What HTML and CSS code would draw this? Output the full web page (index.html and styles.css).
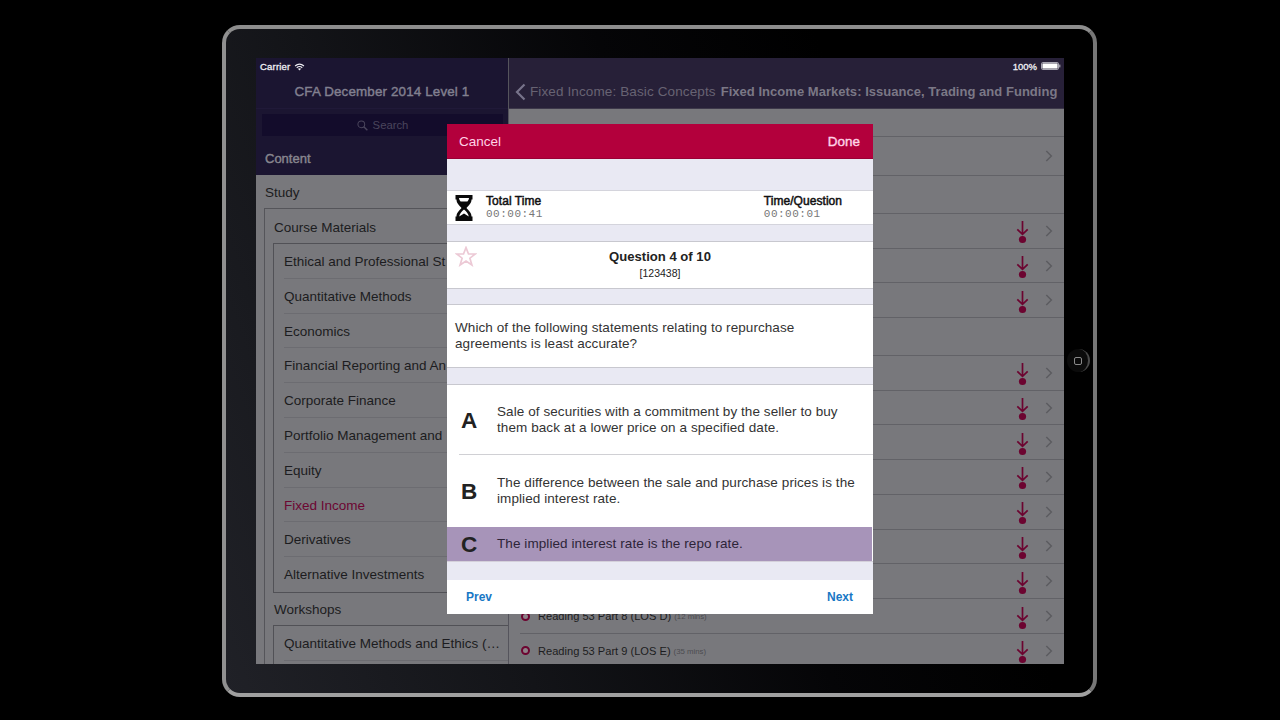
FILE: index.html
```html
<!DOCTYPE html>
<html lang="en">
<head>
<meta charset="UTF-8">
<meta name="viewport" content="width=device-width, initial-scale=1.0">
<title>CFA December 2014 Level 1</title>
<link rel="stylesheet" href="styles.css">
</head>
<body>
<!-- shared icons -->
<svg class="sprite">
    <symbol id="download" viewBox="0 0 14 24">
        <path d="M6.500 1V14M1.300 9.300L6.500 14.400L11.700 9.300" fill="none" stroke="#6c0430" stroke-width="1.700"/>
        <circle cx="6.500" cy="19.500" r="3.600" fill="#6c0430"/>
    </symbol>
    <symbol id="chevron" viewBox="0 0 8 12">
        <path d="M1.3 1L6.3 6L1.3 11" fill="none" stroke="#5c5c60" stroke-width="1.5"/>
    </symbol>
</svg>

<div class="tablet">
    <div class="screen">
        <div class="sidebar">
            <div class="sidebar-top">
                <div class="status">
                    <span>Carrier</span>
                    <svg class="wifi" viewBox="0 0 12 9">
                        <path d="M1 3.4Q6 -1 11 3.4M2.9 5.3Q6 2.6 9.1 5.3" fill="none" stroke="#f0f0f4" stroke-width="1.3"/>
                        <path d="M4.2 6.6Q6 5.2 7.8 6.6L6 8.5Z" fill="#f0f0f4"/>
                    </svg>
                </div>
                <h1>CFA December 2014 Level 1</h1>
            </div>
            <div class="search">
                <svg class="search-icon" viewBox="0 0 12 12">
                    <circle cx="4.7" cy="4.7" r="3.7" fill="none" stroke="#4a455c" stroke-width="1.1"/>
                    <path d="M7.4 7.4L11.3 11.3" stroke="#4a455c" stroke-width="1.5"/>
                </svg>
                <span>Search</span>
            </div>
            <h2>Content</h2>
            <div class="tree">
                <div class="study">Study</div>
                <div class="group">
                    <div class="group-title">Course Materials</div>
                    <ul class="topics">
                        <li>Ethical and Professional St</li>
                        <li>Quantitative Methods</li>
                        <li>Economics</li>
                        <li>Financial Reporting and An</li>
                        <li>Corporate Finance</li>
                        <li>Portfolio Management and</li>
                        <li>Equity</li>
                        <li class="active">Fixed Income</li>
                        <li>Derivatives</li>
                        <li>Alternative Investments</li>
                    </ul>
                    <div class="group-title workshops">Workshops</div>
                    <ul class="topics">
                        <li>Quantitative Methods and Ethics (…</li>
                        <li></li>
                    </ul>
                </div>
            </div>
        </div>

        <div class="detail">
            <div class="detail-top">
                <div class="status right">
                    <span>100%</span>
                    <svg class="battery" viewBox="0 0 20 9">
                        <rect x="0.5" y="0.5" width="17" height="7" rx="1.2" fill="none" stroke="#a8a6b2"/>
                        <rect x="1.4" y="1.4" width="15.2" height="5.2" fill="#fff"/>
                        <path d="M18.8 2.6V5.4" stroke="#c8c8d0"/>
                    </svg>
                </div>
                <div class="crumbs">
                    <svg class="back" viewBox="0 0 11 18"><path d="M9.5 1.5L2 9L9.5 16.5" fill="none" stroke="#77738a" stroke-width="2.2"/></svg>
                    <span class="crumb">Fixed Income: Basic Concepts</span>
                    <span class="current">Fixed Income Markets: Issuance, Trading and Funding</span>
                </div>
            </div>
            <div class="section short"></div>
            <div class="row tall"><svg class="chev"><use href="#chevron"/></svg></div>
            <div class="section"></div>
            <div class="row"><svg class="down"><use href="#download"/></svg><svg class="chev"><use href="#chevron"/></svg></div>
            <div class="row"><svg class="down"><use href="#download"/></svg><svg class="chev"><use href="#chevron"/></svg></div>
            <div class="row"><svg class="down"><use href="#download"/></svg><svg class="chev"><use href="#chevron"/></svg></div>
            <div class="section"></div>
            <div class="row"><svg class="down"><use href="#download"/></svg><svg class="chev"><use href="#chevron"/></svg></div>
            <div class="row"><svg class="down"><use href="#download"/></svg><svg class="chev"><use href="#chevron"/></svg></div>
            <div class="row"><svg class="down"><use href="#download"/></svg><svg class="chev"><use href="#chevron"/></svg></div>
            <div class="row"><svg class="down"><use href="#download"/></svg><svg class="chev"><use href="#chevron"/></svg></div>
            <div class="row"><svg class="down"><use href="#download"/></svg><svg class="chev"><use href="#chevron"/></svg></div>
            <div class="row"><svg class="down"><use href="#download"/></svg><svg class="chev"><use href="#chevron"/></svg></div>
            <div class="row"><svg class="down"><use href="#download"/></svg><svg class="chev"><use href="#chevron"/></svg></div>
            <div class="row inset"><i class="ring"></i><span class="reading">Reading 53 Part 8 (LOS D)</span><small>(12 mins)</small><svg class="down"><use href="#download"/></svg><svg class="chev"><use href="#chevron"/></svg></div>
            <div class="row inset"><i class="ring"></i><span class="reading">Reading 53 Part 9 (LOS E)</span><small>(35 mins)</small><svg class="down"><use href="#download"/></svg><svg class="chev"><use href="#chevron"/></svg></div>
        </div>

        <div class="modal">
            <div class="modal-head">
                <span class="cancel">Cancel</span>
                <span class="done">Done</span>
            </div>
            <div class="timer">
                <svg class="hourglass" viewBox="0 0 18 26">
                    <path d="M0.500 0H17.500V4.500H16.500C16.500 8.500 13.500 10.500 11.500 13C13.500 15.500 16.500 17.500 16.500 21.500H17.500V26H0.500V21.500H1.500C1.500 17.500 4.500 15.500 6.500 13C4.500 10.500 1.500 8.500 1.500 4.500H0.500Z" fill="#0a0a0a"/>
                    <path d="M4 3H14C13.800 4.700 13.200 5.700 12.400 6.500H5.600C4.800 5.700 4.200 4.700 4 3ZM9 14.500C11.500 16.800 13.300 18.300 13.800 21.500L9 18.500L4.200 21.500C4.700 18.300 6.500 16.800 9 14.500Z" fill="#fff"/>
                </svg>
                <div class="time">
                    <b>Total Time</b>
                    <span>00:00:41</span>
                </div>
                <div class="time per-question">
                    <b>Time/Question</b>
                    <span>00:00:01</span>
                </div>
            </div>
            <div class="heading">
                <svg class="star" viewBox="0 0 22 21">
                    <path d="M11 1.600L13.500 8H20.200L14.900 12.200L16.900 19L11 15L5.100 19L7.100 12.200L1.800 8H8.500Z" fill="none" stroke="#ecc9d5" stroke-width="1.700"/>
                </svg>
                <b>Question 4 of 10</b>
                <span class="number">[123438]</span>
            </div>
            <div class="question">Which of the following statements relating to repurchase<br>agreements is least accurate?</div>
            <div class="answers">
                <div class="answer a"><b>A</b><p>Sale of securities with a commitment by the seller to buy<br>them back at a lower price on a specified date.</p></div>
                <div class="answer b"><b>B</b><p>The difference between the sale and purchase prices is the<br>implied interest rate.</p></div>
                <div class="answer c selected"><b>C</b><p>The implied interest rate is the repo rate.</p></div>
            </div>
            <div class="modal-foot">
                <span>Prev</span>
                <span>Next</span>
            </div>
        </div>
    </div>
    <div class="home"><i></i></div>
</div>
</body>
</html>
```
FILE: styles.css
```css
* {
    box-sizing: border-box;
}
body {
    margin: 0;
    width: 1280px;
    height: 720px;
    overflow: hidden;
    background: #000;
    font-family: "Liberation Sans", Arial, sans-serif;
    font-size: 13.5px;
    color: #1c1c20;
    white-space: nowrap;
}
h1, h2, p, ul {
    margin: 0;
    padding: 0;
}
svg, i {
    display: block;
    flex: none;
}
.sprite {
    display: none;
}
.tablet {
    position: relative;
    width: 875px;
    height: 672px;
    margin: 25px 0 0 222px;
    padding: 29px 0 0 30px;
    border: 4px solid #8b8b8b;
    border-color: #8d8d8d #777 #a0a0a0 #909090;
    border-radius: 18px;
    background: linear-gradient(70deg, #202127 0%, #131418 28%, #050507 55%, #000 75%);
}
.screen {
    position: relative;
    display: flex;
    width: 808px;
    height: 606px;
    overflow: hidden;
    background: #78787c;
}

/* left column */
.sidebar {
    width: 253px;
    height: 606px;
    border-right: 1px solid #55545c;
    overflow: hidden;
}
.sidebar-top {
    height: 51px;
    background: #1b1531;
    border-bottom: 1px solid #201938;
}
.status {
    display: flex;
    align-items: center;
    height: 17px;
    padding-left: 4px;
    font-size: 9.5px;
    letter-spacing: 0.2px;
    color: #f0f0f4;
    -webkit-text-stroke: 0.3px;
}
.wifi {
    width: 11px;
    height: 8px;
    margin-left: 4px;
}
.status.right {
    justify-content: flex-end;
    padding-right: 3px;
    letter-spacing: 0;
}
.battery {
    width: 20px;
    height: 9px;
    margin-left: 4px;
}
h1 {
    line-height: 33px;
    font-size: 13.4px;
    font-weight: normal;
    letter-spacing: 0.15px;
    text-align: center;
    color: #828090;
    -webkit-text-stroke: 0.4px;
}
.search {
    display: flex;
    align-items: center;
    justify-content: center;
    height: 33px;
    border: solid #1b1531;
    border-width: 5px 5px 6px 6px;
    background: #130c2b;
    font-size: 11.3px;
    color: #4a455c;
}
.search-icon {
    width: 11px;
    height: 11px;
    margin-right: 5px;
}
h2 {
    height: 33px;
    padding-left: 9px;
    background: #1b1531;
    line-height: 33px;
    font-size: 13px;
    font-weight: normal;
    color: #88868f;
    -webkit-text-stroke: 0.4px;
}
.study {
    height: 33px;
    padding-left: 9px;
    line-height: 35px;
}
.group {
    margin-left: 8px;
    border: solid #55555a;
    border-width: 1px 0 0 1px;
}
.group-title {
    height: 34px;
    padding-left: 9px;
    line-height: 37px;
}
.topics {
    margin-left: 8px;
    border: 1px solid #515156;
    border-right: 0;
    list-style: none;
}
.topics li {
    height: 34.8px;
    padding-left: 10px;
    line-height: 36.3px;
    background: linear-gradient(#6c6c71, #6c6c71) 10px 100% / 100% 1px no-repeat;
}
.topics li:last-child {
    background: none;
}
.workshops {
    height: 32px;
    line-height: 33px;
}
.topics .active {
    color: #6c0632;
}

/* right column */
.detail {
    flex: 1;
}
.detail-top {
    height: 51px;
    background: #272038;
    border-bottom: 1px solid #3d384a;
}
.crumbs {
    display: flex;
    align-items: center;
    height: 33px;
    padding-left: 6px;
    color: #676373;
}
.crumb {
    letter-spacing: 0.12px;
}
.back {
    width: 11px;
    height: 18px;
    margin-right: 4px;
}
.current {
    margin-left: 5px;
    font-size: 13px;
    font-weight: bold;
    letter-spacing: 0.03px;
    color: #7b7886;
}
.section {
    height: 38px;
    border-bottom: 1px solid #626267;
}
.section.short {
    height: 28px;
}
.row {
    display: flex;
    align-items: center;
    height: 34.7px;
    padding: 0 11px;
    border-bottom: 1px solid #626267;
}
.row.tall {
    height: 39px;
}
.inset {
    border: 0;
    background: linear-gradient(#626267, #626267) 11px 100% / 100% 1px no-repeat;
}
.down {
    width: 14px;
    height: 24px;
    margin: 3px 15.5px 0 auto;
}
.chev {
    width: 8px;
    height: 12px;
}
.tall .chev {
    margin-left: auto;
}
.ring {
    width: 9px;
    height: 9px;
    margin: 0 8px 0 1px;
    border: 2px solid #6c0430;
    border-radius: 50%;
    background: #8d8188;
}
.reading {
    font-size: 11.1px;
}
.row small {
    margin: 1px 0 0 3px;
    font-size: 7.8px;
    color: #4c4c50;
}

/* question dialog */
.modal {
    position: absolute;
    left: 191px;
    top: 66px;
    width: 426px;
    height: 490px;
    background: #e9e9f3;
}
.modal-head {
    display: flex;
    justify-content: space-between;
    height: 35px;
    padding: 0 13px 0 12px;
    background: #b3003c;
    border-bottom: 1px solid #990035;
    line-height: 35px;
    color: #ffd3e6;
}
.done {
    -webkit-text-stroke: 0.4px;
}
.timer {
    display: flex;
    height: 35px;
    margin-top: 31px;
    padding: 4px 8px;
    border: solid #d4d4dc;
    border-width: 1px 0;
    background: #fff;
}
.hourglass {
    width: 18px;
    height: 26px;
}
.time {
    display: flex;
    flex-direction: column;
    margin-left: 13px;
}
.time b {
    line-height: 13px;
    font-size: 12px;
    font-weight: normal;
    letter-spacing: 0.05px;
    color: #111;
    -webkit-text-stroke: 0.5px;
}
.time span {
    line-height: 13px;
    font-family: "Liberation Mono", "Courier New", monospace;
    font-size: 11px;
    letter-spacing: 0.5px;
    color: #777;
}
.per-question {
    margin-left: 221px;
}
.heading {
    position: relative;
    height: 48px;
    margin-top: 16px;
    padding-top: 7px;
    border: solid #c8c8cf;
    border-width: 1px 0;
    background: #fff;
    text-align: center;
    color: #222;
}
.heading b, .number {
    display: block;
    line-height: 15px;
}
.heading b {
    font-size: 13.1px;
}
.number {
    font-size: 10.5px;
    line-height: 19px;
}
.star {
    position: absolute;
    left: 8px;
    top: 4px;
    width: 22px;
    height: 21px;
}
.question {
    height: 64px;
    margin-top: 15px;
    padding: 15px 8px;
    border: solid #c8c8cf;
    border-width: 1px 0;
    background: #fff;
    line-height: 15.6px;
    letter-spacing: 0.07px;
    color: #333;
}
.answers {
    margin-top: 16px;
    border-top: 1px solid #c8c8cf;
    border-bottom: 1px solid #d4d0da;
    background: #fff;
    color: #333;
}
.answer {
    display: flex;
    align-items: center;
    line-height: 15.6px;
    letter-spacing: 0.08px;
}
.answer b {
    width: 50px;
    padding: 2px 0 0 14px;
    font-size: 22.5px;
    color: #222;
}
.answer p {
    padding-bottom: 1px;
}
.a {
    height: 70px;
    background: linear-gradient(#d0d0d4, #d0d0d4) 12px 100% / 100% 1px no-repeat;
}
.b {
    height: 72px;
}
.selected {
    height: 34px;
    margin-right: 1px;
    background: #a794b9;
    color: #2d2438;
}
.modal-foot {
    display: flex;
    justify-content: space-between;
    height: 34px;
    margin-top: 18px;
    padding: 0 20px 0 19px;
    background: #fff;
    line-height: 34px;
    font-size: 12px;
    font-weight: bold;
    color: #1877c5;
}

/* home button */
.home {
    position: absolute;
    right: 3px;
    top: 320px;
    display: flex;
    align-items: center;
    justify-content: center;
    width: 23px;
    height: 23px;
    border-radius: 50%;
    border-right: 2px solid #4a4a4a;
    background: #0b0b0b;
}
.home i {
    width: 8px;
    height: 8px;
    border: 1px solid #8a8a8a;
    border-radius: 2px;
}
```
